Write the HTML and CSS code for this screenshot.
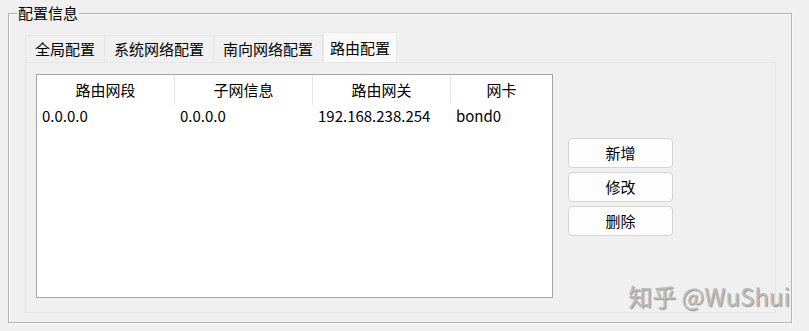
FILE: index.html
```html
<!DOCTYPE html>
<html lang="zh-CN">
<head>
<meta charset="utf-8">
<title>配置信息</title>
<link rel="stylesheet" href="styles.css">
</head>
<body>
<div class="group">
  <div class="group-title">配置信息</div>
  <div class="tabs">
    <div class="tab">全局配置</div>
    <div class="tab">系统网络配置</div>
    <div class="tab">南向网络配置</div>
    <div class="tab active">路由配置</div>
  </div>
  <div class="pane">
    <div class="table">
      <div class="thead">
        <div class="th">路由网段</div>
        <div class="th">子网信息</div>
        <div class="th">路由网关</div>
        <div class="th">网卡</div>
      </div>
      <div class="tr">
        <div class="td">0.0.0.0</div>
        <div class="td">0.0.0.0</div>
        <div class="td">192.168.238.254</div>
        <div class="td">bond0</div>
      </div>
    </div>
    <div class="buttons">
      <button class="btn">新增</button>
      <button class="btn">修改</button>
      <button class="btn">删除</button>
    </div>
  </div>
</div>
<div class="watermark">知乎 @WuShui</div>
</body>
</html>
```

FILE: styles.css
```css
html, body {
  margin: 0;
  padding: 0;
}
body {
  width: 809px;
  height: 331px;
  background: #f0f0f0;
  font-family: "Noto Sans CJK SC", "Noto Sans", sans-serif;
  font-size: 15px;
  line-height: 20px;
  color: #000;
  position: relative;
  overflow: hidden;
}
.group {
  position: relative;
  box-sizing: border-box;
  margin: 13px 17px 0 8px;
  height: 310px;
  border: 1px solid #b4b4b4;
  box-shadow: 1px 1px 0 #fbfbfb, inset 1px 1px 0 #fbfbfb;
  padding: 18px 15px 9px 16px;
}
.group-title {
  position: absolute;
  top: -11px;
  left: 8px;
  padding: 0 1px;
  background: #f0f0f0;
  line-height: 20px;
}
.tabs {
  display: flex;
  align-items: flex-end;
  height: 30px;
}
.tab {
  box-sizing: border-box;
  height: 27px;
  line-height: 26px;
  padding: 0 9px 0 9px;
  border: 1px solid #e4e4e4;
  border-bottom: none;
  border-left: none;
  background: #f0f0f0;
}
.tab:first-child {
  border-left: 1px solid #e4e4e4;
  padding-left: 9px;
}
.tab.active {
  height: 30px;
  line-height: 29px;
  padding: 0 6px 0 6px;
  background: #f9f9f9;
  border: 1px solid #e8e8e8;
  border-bottom: none;
}
.pane {
  box-sizing: border-box;
  height: 251px;
  border: 1px solid #e6e6e6;
  background: #f0f0f0;
  display: flex;
  align-items: center;
  padding: 0 0 0 10px;
  gap: 15px;
}
.table {
  box-sizing: border-box;
  width: 517px;
  height: 224px;
  margin-top: -3px;
  background: #fff;
  border: 1px solid #a5a5a5;
}
.thead, .tr {
  display: grid;
  grid-template-columns: 138px 138px 138px 101px;
}
.thead {
  height: 30px;
}
.th {
  text-align: center;
  line-height: 30px;
  border-right: 1px solid #e5e5e5;
}
.th:last-child {
  border-right: none;
}
.tr {
  height: 22px;
}
.td {
  padding-left: 5px;
  line-height: 22px;
  white-space: nowrap;
}
.buttons {
  display: flex;
  flex-direction: column;
  gap: 4px;
  margin-top: -2px;
}
.btn {
  box-sizing: border-box;
  width: 105px;
  height: 30px;
  font-family: inherit;
  font-size: 15px;
  color: #000;
  background: #fdfdfd;
  border: 1px solid #d4d4d4;
  border-radius: 4px;
  padding: 0;
}
.watermark {
  position: absolute;
  right: 19px;
  top: 280px;
  font-size: 24px;
  line-height: 32px;
  color: #bcbcbc;
  text-shadow: 1px 1px 1px rgba(0, 0, 0, 0.4);
  white-space: nowrap;
}
```
